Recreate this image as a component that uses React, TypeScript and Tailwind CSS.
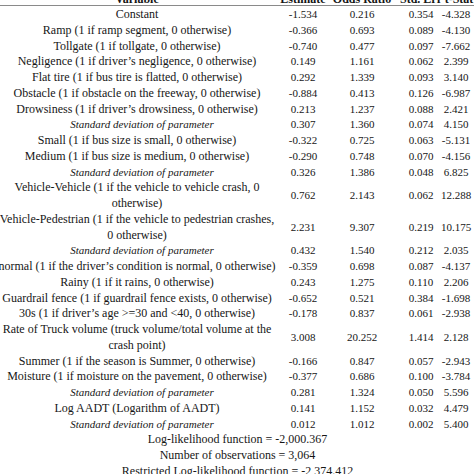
import React from "react";

type Row = { v: React.ReactNode; italic?: boolean; n: [string, string, string, string] };

const STD = "Standard deviation of parameter";

const rows: Row[] = [
  { v: "Constant", n: ["-1.534", "0.216", "0.354", "-4.328"] },
  { v: "Ramp (1 if ramp segment, 0 otherwise)", n: ["-0.366", "0.693", "0.089", "-4.130"] },
  { v: "Tollgate (1 if tollgate, 0 otherwise)", n: ["-0.740", "0.477", "0.097", "-7.662"] },
  { v: "Negligence (1 if driver\u2019s negligence, 0 otherwise)", n: ["0.149", "1.161", "0.062", "2.399"] },
  { v: "Flat tire (1 if bus tire is flatted, 0 otherwise)", n: ["0.292", "1.339", "0.093", "3.140"] },
  { v: "Obstacle (1 if obstacle on the freeway, 0 otherwise)", n: ["-0.884", "0.413", "0.126", "-6.987"] },
  { v: "Drowsiness (1 if driver\u2019s drowsiness, 0 otherwise)", n: ["0.213", "1.237", "0.088", "2.421"] },
  { v: STD, italic: true, n: ["0.307", "1.360", "0.074", "4.150"] },
  { v: "Small (1 if bus size is small, 0 otherwise)", n: ["-0.322", "0.725", "0.063", "-5.131"] },
  { v: "Medium (1 if bus size is medium, 0 otherwise)", n: ["-0.290", "0.748", "0.070", "-4.156"] },
  { v: STD, italic: true, n: ["0.326", "1.386", "0.048", "6.825"] },
  {
    v: (
      <>
        Vehicle-Vehicle (1 if the vehicle to vehicle crash, 0
        <br />
        otherwise)
      </>
    ),
    n: ["0.762", "2.143", "0.062", "12.288"],
  },
  {
    v: (
      <>
        Vehicle-Pedestrian (1 if the vehicle to pedestrian crashes,
        <br />0 otherwise)
      </>
    ),
    n: ["2.231", "9.307", "0.219", "10.175"],
  },
  { v: STD, italic: true, n: ["0.432", "1.540", "0.212", "2.035"] },
  { v: "normal (1 if the driver\u2019s condition is normal, 0 otherwise)", n: ["-0.359", "0.698", "0.087", "-4.137"] },
  { v: "Rainy (1 if it rains, 0 otherwise)", n: ["0.243", "1.275", "0.110", "2.206"] },
  { v: "Guardrail fence (1 if guardrail fence exists, 0 otherwise)", n: ["-0.652", "0.521", "0.384", "-1.698"] },
  { v: "30s (1 if driver\u2019s age >=30 and <40, 0 otherwise)", n: ["-0.178", "0.837", "0.061", "-2.938"] },
  {
    v: (
      <>
        Rate of Truck volume (truck volume/total volume at the
        <br />
        crash point)
      </>
    ),
    n: ["3.008", "20.252", "1.414", "2.128"],
  },
  { v: "Summer (1 if the season is Summer, 0 otherwise)", n: ["-0.166", "0.847", "0.057", "-2.943"] },
  { v: "Moisture (1 if moisture on the pavement, 0 otherwise)", n: ["-0.377", "0.686", "0.100", "-3.784"] },
  { v: STD, italic: true, n: ["0.281", "1.324", "0.050", "5.596"] },
  { v: "Log AADT (Logarithm of AADT)", n: ["0.141", "1.152", "0.032", "4.479"] },
  { v: STD, italic: true, n: ["0.012", "1.012", "0.002", "5.400"] },
];

const numW = ["w-[58px]", "w-[60px]", "w-[58px]", "w-[12px]"];

export default function App() {
  return (
    <div
      className="w-[474px] h-[474px] overflow-hidden bg-white text-[#161616]"
      style={{ fontFamily: '"Liberation Serif", "Times New Roman", serif' }}
    >
      <div className="w-[475px] mt-[-8px]">
        {/* header */}
        <div className="flex h-[14px] items-center border-b border-[#8a8a8a] text-[12px] font-bold leading-[14px]">
          <div className="w-[274px] flex justify-center whitespace-nowrap">Variable</div>
          <div className="w-[58px] flex justify-center whitespace-nowrap">Estimate</div>
          <div className="w-[60px] flex justify-center whitespace-nowrap">Odds Ratio</div>
          <div className="w-[58px] flex justify-center whitespace-nowrap">Std. Err</div>
          <div className="w-[12px] flex justify-center whitespace-nowrap pl-[6px]">t-Stat</div>
        </div>
        <div className="pt-[1px]">
          {rows.map((r, i) => (
            <div key={i} className="flex items-center leading-[15.75px]">
              <div className="w-[274px] flex justify-center whitespace-nowrap">
                {r.italic ? (
                  <span className="italic text-[11px] pl-[10px]">{r.v}</span>
                ) : (
                  <span className="text-[12px] text-center">{r.v}</span>
                )}
              </div>
              {r.n.map((x, j) => (
                <div key={j} className={`${numW[j]} flex justify-center whitespace-nowrap text-[11px]`}>
                  {x}
                </div>
              ))}
            </div>
          ))}
          <div className="text-[12px] leading-[15.75px] text-center whitespace-nowrap">
            <div>Log-likelihood function = -2,000.367</div>
            <div>Number of observations = 3,064</div>
            <div>Restricted Log-likelihood function = -2,374.412</div>
          </div>
        </div>
      </div>
    </div>
  );
}
